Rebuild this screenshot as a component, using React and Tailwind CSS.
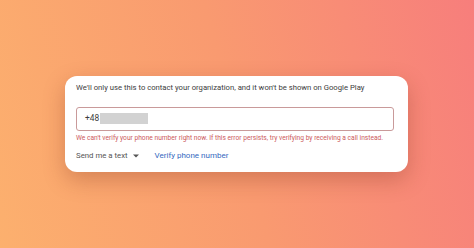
export default function App() {
  return (
    <div className="w-[474px] h-[248px] bg-[linear-gradient(75deg,#fcb06e_0%,#f99a70_50%,#f77e7c_100%)] flex items-center justify-center" style={{ fontFamily: 'Roboto, "Liberation Sans", sans-serif' }}>
      <div className="w-[343px] h-[96px] -mt-[1px] -ml-[1px] bg-white rounded-[12px] shadow-[0_8px_22px_rgba(120,40,20,0.28)] pl-[11px] pr-[14px] pt-[6px]">
        <div className="text-[7.7px] leading-[10px] text-[#3c3c3c] mt-[1px] whitespace-nowrap">We'll only use this to contact your organization, and it won't be shown on Google Play</div>
        <div className="mt-[14px] h-[24px] border border-[#c99a9a] rounded-[3px] flex items-center pl-[8px]">
          <span className="text-[8.4px] text-[#3c3c3c]">+48</span>
          <span className="w-[48px] h-[11px] bg-[#d2d2d2] ml-[1px]"></span>
        </div>
        <div className="mt-[3px] text-[6.65px] leading-[9px] text-[#cc5a5c] whitespace-nowrap">We can't verify your phone number right now. If this error persists, try verifying by receiving a call instead.</div>
        <div className="mt-[8px] flex items-center">
          <span className="text-[7.8px] leading-[10px] text-[#555]">Send me a text</span>
          <svg width="6" height="4" viewBox="0 0 6 4" className="ml-[5px]"><path d="M0 0.5 L6 0.5 L3 3.5 Z" fill="#555" /></svg>
          <span className="ml-[16px] text-[8px] leading-[10px] text-[#3569c0]">Verify phone number</span>
        </div>
      </div>
    </div>
  );
}
